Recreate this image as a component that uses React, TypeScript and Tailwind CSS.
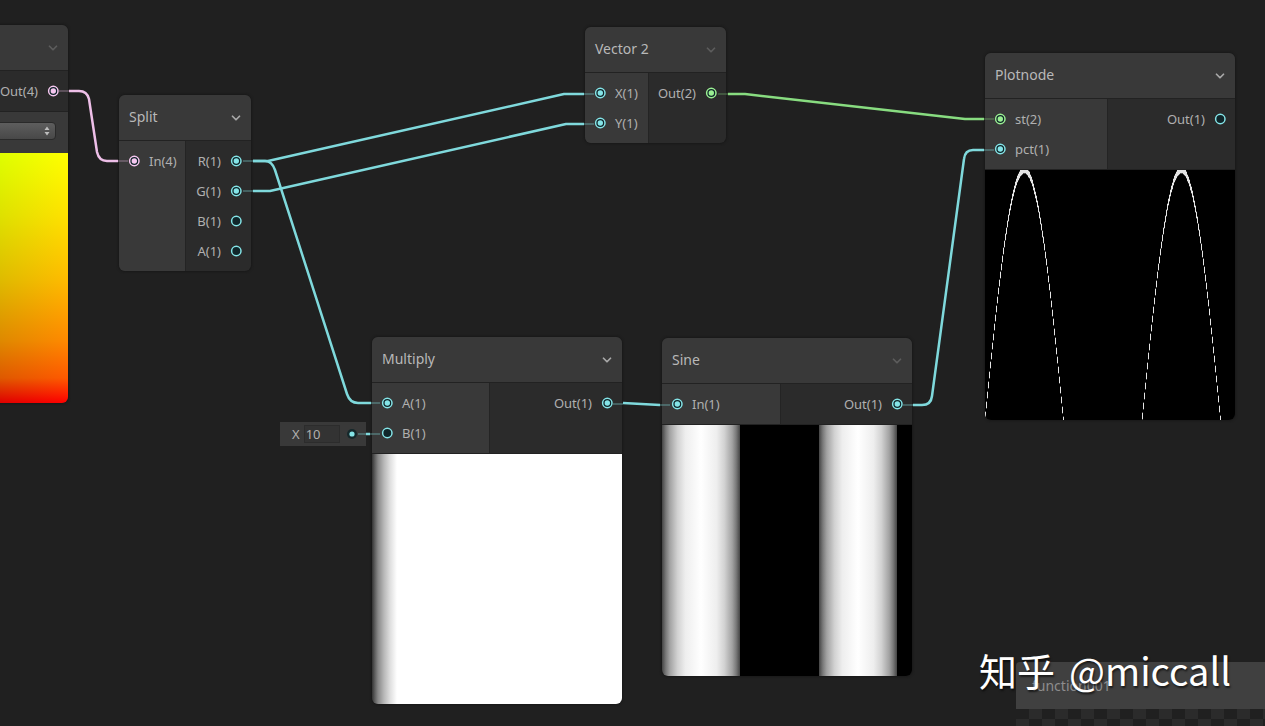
import React from 'react';
import { ChevronDown } from 'lucide-react';

type Port = { label: string; color: string; connected?: boolean };

const CYAN = '#84e4e7';
const PINK = '#f6c6ef';
const GREEN = '#9aef92';

const Socket: React.FC<{ port: Port }> = ({ port }) => (
  <svg width="12" height="12" viewBox="0 0 12 12" className="shrink-0">
    <circle cx="6.3" cy="6" r="4.7" fill="#10262a" stroke={port.color} strokeWidth="1.5" />
    {port.connected && <circle cx="6.3" cy="6" r="2.7" fill={port.color} />}
  </svg>
);

type NodeProps = {
  title: string;
  className: string;
  inputs?: Port[];
  outputs: Port[];
  inputClass?: string;
  dim?: boolean;
  children?: React.ReactNode;
};

const GraphNode: React.FC<NodeProps> = ({ title, className, inputs, outputs, inputClass = '', dim, children }) => (
  <section className={`absolute overflow-hidden rounded-md bg-[#2b2b2b] shadow-[0_0_2px_1px_#191919] ${className}`}>
    <header className="flex h-[46px] items-center justify-between border-b border-[#222] bg-[#393939] pl-[10px] pr-2">
      <h2 className="pb-[2px] text-[14px] leading-5 text-[#b8b8b8]">{title}</h2>
      <button type="button" aria-label="Toggle preview" className={dim ? 'text-[#5c5c5c]' : 'text-[#a8a8a8]'}>
        <ChevronDown className="h-[14px] w-[14px]" strokeWidth={3} />
      </button>
    </header>
    <div className="flex">
      {inputs && (
        <ul className={`border-r border-[#242424] bg-[#393939] py-[5px] pl-[9px] ${inputClass}`}>
          {inputs.map((port) => (
            <li key={port.label} className="flex h-[30px] items-center gap-[9px]">
              <Socket port={port} />
              <span>{port.label}</span>
            </li>
          ))}
        </ul>
      )}
      <ul className="flex-1 py-[5px] pr-[9px]">
        {outputs.map((port) => (
          <li key={port.label} className="flex h-[30px] items-center justify-end gap-[9px]">
            <span>{port.label}</span>
            <Socket port={port} />
          </li>
        ))}
      </ul>
    </div>
    {children}
  </section>
);

// One sample per column, so the steep parts of the curve break into dashes
const SinePlot: React.FC = () => {
  const columns = Array.from({ length: 250 }, (_, x) => ({
    x,
    y: Math.round(250 - Math.sin(((x + 0.5) / 250) * 10) * 250),
  })).filter((c) => c.y < 256);

  return (
    <div className="border-t border-[#222] bg-black">
      <svg viewBox="0 0 250 250" className="block w-full" shapeRendering="crispEdges">
        {columns.map(({ x, y }) => (
          <g key={x} fill="#fff">
            <rect x={x} y={y - 4} width="1" height="8" opacity="0.3" />
            <rect x={x} y={y - 3} width="1" height="6" opacity="0.85" />
          </g>
        ))}
      </svg>
    </div>
  );
};

const Wires: React.FC = () => (
  <svg className="pointer-events-none absolute inset-0 h-full w-full" fill="none" strokeWidth="2.5">
    <g stroke="#eebfe8">
      <path d="M69 91H79Q87 91 89 99L97 152Q99 161 107 161H118" />
      <path d="M59 91H69M118 161H128" strokeWidth="2" opacity="0.25" />
    </g>
    <g stroke="#7fd9dc">
      <path d="M253 161H268L564 94H584" strokeLinejoin="round" />
      <path d="M253 161H265Q272 161 275 170L347 394Q350 403 358 403H371" />
      <path d="M253 191H270L566 124H584" strokeLinejoin="round" />
      <path d="M623 403L660 405" />
      <path d="M913 405H922Q931 405 932 396L964 159Q965 150 973 150H984" />
      <path
        d="M243 161H253M243 191H253M584 94H594M584 124H594M371 403H380M613 404H623M660 405H670M903 405H913M984 150H994M358 434H380"
        strokeWidth="2"
        opacity="0.3"
      />
      <path d="M366 434H370" />
    </g>
    <g stroke="#88dc80">
      <path d="M728 94H745L965 119H984" strokeLinejoin="round" />
      <path d="M718 94H728M984 119H994" strokeWidth="2" opacity="0.25" />
    </g>
  </svg>
);

const App: React.FC = () => (
  <main className="relative min-h-screen overflow-hidden bg-[#202020] font-['Noto_Sans','Noto_Sans_CJK_SC',sans-serif] text-[13px] leading-5 text-[#b0b0b0]">
    <GraphNode
      title=""
      className="-left-[182px] top-[25px] w-[250px]"
      outputs={[{ label: 'Out(4)', color: PINK, connected: true }]}
      dim
    >
      <div className="h-[42px] border-t border-[#222] bg-[#393939] px-3 pt-[10px]">
        <div className="relative w-full">
          <select
            aria-label="Channel"
            className="block h-[18px] w-full appearance-none rounded border border-[#2a2a2a] bg-linear-to-b from-[#5e5e5e] to-[#484848]"
          />
          <svg className="pointer-events-none absolute right-1.5 top-1 h-[10px] w-[6px]" viewBox="0 0 6 10" fill="#bdbdbd">
            <path d="M3 0.5L5.5 4H0.5ZM3 9.5L5.5 6H0.5Z" />
          </svg>
        </div>
      </div>
      <div className="h-[250px] bg-[linear-gradient(to_top,#000,#005900_10%,#008900_25%,#00bc00_50%,#00e100_75%,#0f0),linear-gradient(to_right,#000,#890000_25%,#bc0000_50%,#e10000_75%,#f00)] bg-blend-screen" />
    </GraphNode>

    <GraphNode
      title="Split"
      className="left-[119px] top-[95px] w-[132px]"
      inputClass="w-[67px]"
      inputs={[{ label: 'In(4)', color: PINK, connected: true }]}
      outputs={[
        { label: 'R(1)', color: CYAN, connected: true },
        { label: 'G(1)', color: CYAN, connected: true },
        { label: 'B(1)', color: CYAN },
        { label: 'A(1)', color: CYAN },
      ]}
    />

    <GraphNode
      title="Vector 2"
      className="left-[585px] top-[27px] w-[141px]"
      inputClass="w-[64px]"
      inputs={[
        { label: 'X(1)', color: CYAN, connected: true },
        { label: 'Y(1)', color: CYAN, connected: true },
      ]}
      outputs={[{ label: 'Out(2)', color: GREEN, connected: true }]}
      dim
    />

    <GraphNode
      title="Plotnode"
      className="left-[985px] top-[53px] w-[250px]"
      inputClass="w-[123px]"
      inputs={[
        { label: 'st(2)', color: GREEN, connected: true },
        { label: 'pct(1)', color: CYAN, connected: true },
      ]}
      outputs={[{ label: 'Out(1)', color: CYAN }]}
    >
      <SinePlot />
    </GraphNode>

    <GraphNode
      title="Multiply"
      className="left-[372px] top-[337px] w-[250px]"
      inputClass="w-[118px]"
      inputs={[
        { label: 'A(1)', color: CYAN, connected: true },
        { label: 'B(1)', color: CYAN },
      ]}
      outputs={[{ label: 'Out(1)', color: CYAN, connected: true }]}
    >
      <div className="h-[251px] border-t border-[#222] bg-[linear-gradient(to_right,#333,#606060_3px,#888_6px,#b8b8b8_12px,#dedede_18px,#fff_25px)]" />
    </GraphNode>

    <GraphNode
      title="Sine"
      className="left-[662px] top-[338px] w-[250px]"
      inputClass="w-[119px]"
      inputs={[{ label: 'In(1)', color: CYAN, connected: true }]}
      outputs={[{ label: 'Out(1)', color: CYAN, connected: true }]}
      dim
    >
      <div className="flex h-[252px] border-t border-[#222] bg-black">
        <div className="w-[78px] bg-[linear-gradient(to_right,#444,#7a7a7a_5%,#a2a2a2_10%,#d2d2d2_20%,#eee_30%,#fff_50%,#eee_70%,#d2d2d2_80%,#a2a2a2_90%,#7a7a7a_95%,#444)]" />
        <div className="ml-[79px] w-[78px] bg-[linear-gradient(to_right,#444,#7a7a7a_5%,#a2a2a2_10%,#d2d2d2_20%,#eee_30%,#fff_50%,#eee_70%,#d2d2d2_80%,#a2a2a2_90%,#7a7a7a_95%,#444)]" />
      </div>
    </GraphNode>

    {/* Inline default value for Multiply B */}
    <div className="absolute left-[280px] top-[422px] flex h-6 w-[86px] items-center bg-[#393939] pl-3">
      <label htmlFor="multiply-b">X</label>
      <input
        id="multiply-b"
        defaultValue="10"
        className="ml-1 h-[18px] w-9 border border-[#2c2c2c] bg-[#333] px-px text-[13px] text-[#b0b0b0]"
      />
      <svg width="12" height="12" viewBox="0 0 12 12" className="ml-[6px]">
        <circle cx="6" cy="6" r="5" fill="#15282b" />
        <circle cx="6" cy="6" r="2.6" fill={CYAN} />
      </svg>
    </div>

    <Wires />

    {/* Floating main preview */}
    <section className="absolute left-[1016px] right-0 top-[662px]">
      <header className="flex h-[47px] items-center rounded-tl bg-[#404040] pl-4">
        <h2 className="text-[14px] leading-5 text-[#8d8d8d]">function001</h2>
      </header>
      <div className="h-[17px] bg-[#2b2b2b] bg-[conic-gradient(#2b2b2b_25%,#202020_0_50%,#2b2b2b_0_75%,#202020_0)] bg-size-[26px_20px]" />
    </section>

    <p className="absolute right-[34px] top-[646px] flex gap-[14px] whitespace-nowrap font-['Noto_Sans_CJK_SC',sans-serif] text-[38px] leading-[48px] text-white [text-shadow:1px_2px_2px_#0009]">
      <span>知乎</span>
      <span>@miccall</span>
    </p>
  </main>
);

export default App;
